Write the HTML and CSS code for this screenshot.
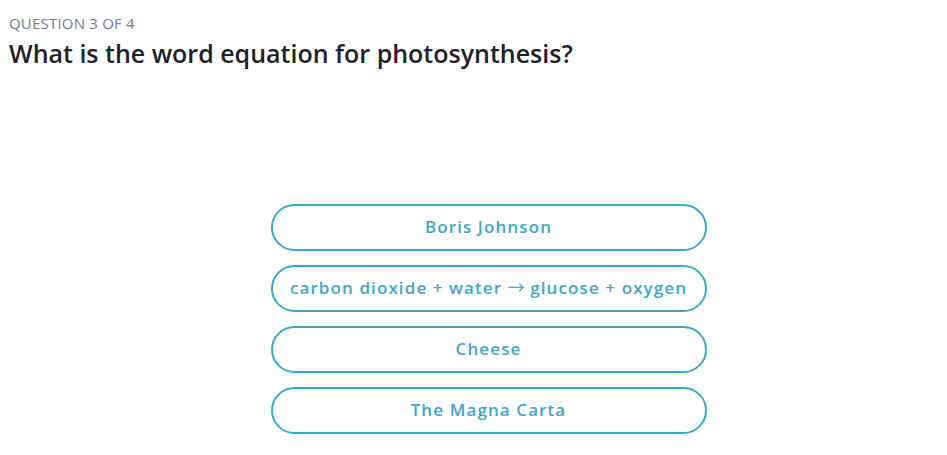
FILE: index.html
```html
<!DOCTYPE html>
<html lang="en">
<head>
    <meta charset="UTF-8">
    <meta name="viewport" content="width=device-width, initial-scale=1.0">
    <title>Quiz</title>
    <link rel="stylesheet" href="styles.css">
</head>
<body>
    <div class="header">
        <p class="count">QUESTION 3 OF 4</p>
        <h1 class="question">What is the word equation for photosynthesis?</h1>
    </div>
    <div class="answers">
        <button class="answer">Boris Johnson</button>
        <button class="answer">carbon dioxide + water <span class="arrow">&rarr;</span> glucose + oxygen</button>
        <button class="answer">Cheese</button>
        <button class="answer">The Magna Carta</button>
    </div>
</body>
</html>
```

FILE: styles.css
```css
*{
    margin: 0;
    padding: 0;
    box-sizing: border-box;
    font-family: "Open Sans", Arial, sans-serif;
}
body{
    background-color: #fff;
    padding: 13px 9px;
}
.count{
    font-size: 15px;
    color: #737a8c;
    line-height: 20px;
    letter-spacing: 0.2px;
}
.question{
    font-size: 25px;
    font-weight: 600;
    color: #1f2228;
    line-height: 34px;
    margin-top: 3px;
}
.answers{
    display: flex;
    flex-direction: column;
    align-items: center;
    gap: 14px;
    margin-top: 134px;
    padding-left: 30px;
}
.answer{
    width: 436px;
    height: 47px;
    background-color: #fff;
    border: 2px solid #3aa8cb;
    border-radius: 24px;
    color: #45a4c8;
    font-size: 17px;
    font-weight: 600;
    line-height: 22px;
    padding-bottom: 2px;
    letter-spacing: 1.1px;
    cursor: pointer;
}
.arrow{
    font-family: "Noto Sans CJK SC", sans-serif;
    font-weight: 400;
    line-height: 1;
    letter-spacing: 0;
}
```
